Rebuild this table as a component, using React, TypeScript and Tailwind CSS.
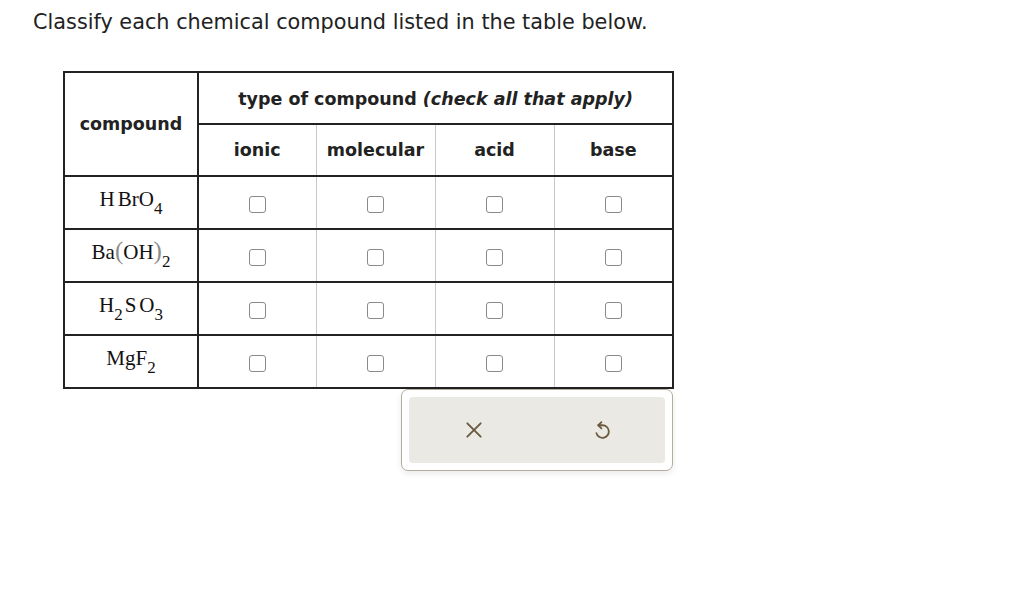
import React from "react";

const serif = "font-['Liberation_Serif',serif]";

function Box() {
  return <span className="inline-block w-[17px] h-[17px] rounded-[3px] border-[1.5px] border-[#8a8a8a] bg-white align-middle" />;
}

function Sub({ children }: { children: React.ReactNode }) {
  return <sub className="text-[17px] relative top-[3px] align-sub leading-none">{children}</sub>;
}

const paren = "text-[#8c8c8c] text-[25px] font-light leading-none";

const rows: React.ReactNode[] = [
  <>H<span className="ml-[3px]">BrO</span><Sub>4</Sub></>,
  <>Ba<span className={paren}>(</span>OH<span className={paren}>)</span><Sub>2</Sub></>,
  <>H<Sub>2</Sub><span className="ml-[2px]">S</span><span className="ml-[3px]">O</span><Sub>3</Sub></>,
  <>MgF<Sub>2</Sub></>,
];

export default function App() {
  return (
    <div className="min-h-screen bg-white font-['DejaVu_Sans',sans-serif] text-[#222]">
      <h1 className="pt-[8px] pl-[33px] text-[20.8px] leading-[28px]">
        Classify each chemical compound listed in the table below.
      </h1>

      <div className="ml-[63px] mt-[35px] w-[610px]">
        <table className="border-collapse border-2 border-[#222] table-fixed w-[609px]">
          <colgroup>
            <col className="w-[134px]" />
            <col className="w-[118px]" />
            <col className="w-[119px]" />
            <col className="w-[119px]" />
            <col className="w-[119px]" />
          </colgroup>
          <thead>
            <tr className="h-[52px]">
              <th rowSpan={2} className="border-2 border-[#222] text-[17.5px] font-bold">compound</th>
              <th colSpan={4} className="border-b-2 border-[#222] text-[17.5px] font-bold pt-[2px]">
                type of compound <i>(check all that apply)</i>
              </th>
            </tr>
            <tr className="h-[52px] text-[17.5px] font-bold">
              <th className="border-r border-[#c8c8c8]">ionic</th>
              <th className="border-r border-[#c8c8c8]">molecular</th>
              <th className="border-r border-[#c8c8c8]">acid</th>
              <th>base</th>
            </tr>
          </thead>
          <tbody>
            {rows.map((r, i) => (
              <tr key={i} className="h-[53px] border-t-2 border-[#222]">
                <td className={`border-r-2 border-[#222] text-center text-[21px] text-[#111] pb-[6px] ${serif}`}>{r}</td>
                <td className="border-r border-[#c8c8c8] text-center pt-[3px]"><Box /></td>
                <td className="border-r border-[#c8c8c8] text-center pt-[3px]"><Box /></td>
                <td className="border-r border-[#c8c8c8] text-center pt-[3px]"><Box /></td>
                <td className="text-center pt-[3px]"><Box /></td>
              </tr>
            ))}
          </tbody>
        </table>

        <div className="ml-[338px] w-[272px] h-[82px] rounded-[7px] border border-[#b3ad9e] bg-white p-[7px] shadow-[0_3px_6px_rgba(0,0,0,0.08)]">
          <div className="h-full rounded-[4px] bg-[#ebe9e4] flex items-center">
            <div className="flex-1 flex justify-center pl-[2px]">
              <svg width="20" height="20" viewBox="0 0 18 18" fill="none" stroke="#6a5a3e" strokeWidth="1.7" strokeLinecap="round">
                <path d="M3 3 L15 15 M15 3 L3 15" />
              </svg>
            </div>
            <div className="flex-1 flex justify-center pl-[2px]">
              <svg width="19" height="21" viewBox="0 0 18 20" fill="none" stroke="#6a5a3e" strokeWidth="1.7" strokeLinecap="round" strokeLinejoin="round">
                <path d="M8 2 L5 5 L8 8" />
                <path d="M5 5 H9 A6 6 0 1 1 3.2 12.5" />
              </svg>
            </div>
          </div>
        </div>
      </div>
    </div>
  );
}
